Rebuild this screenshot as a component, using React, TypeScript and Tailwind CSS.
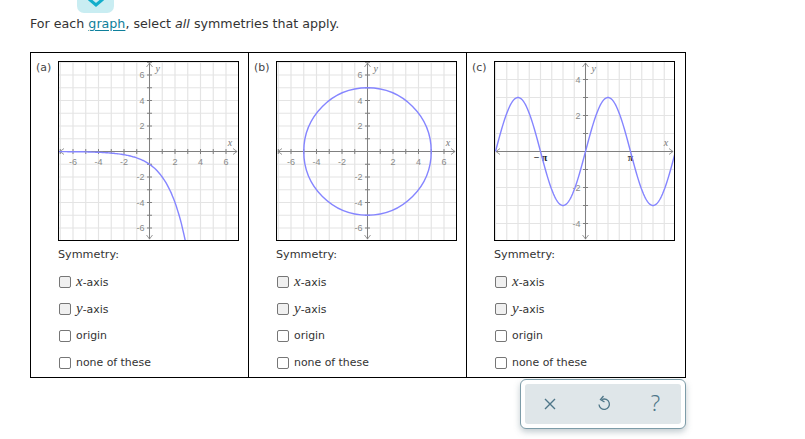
import React from 'react';

const GRID = '#e4e4e4';
const AXIS = '#808080';
const CURVE = '#8585ff';
const W = 179;
const H = 178;
const OX = 90.5;
const OY = 89.5;

type GraphProps = {
  stepX: number;
  stepY: number;
  xLabels: { at: number; text: string; dark?: boolean }[];
  yLabels: { at: number; text: string }[];
  tickX?: boolean;
  children: React.ReactNode;
};

// grid line positions on one side of the axis and the other
const steps = (origin: number, step: number, size: number) => {
  const out: number[] = [];
  for (let p = origin % step; p <= size; p += step) out.push(p);
  return out;
};

const Graph: React.FC<GraphProps> = ({ stepX, stepY, xLabels, yLabels, tickX = true, children }) => (
  <div className="w-[181px] h-[180px] border border-black bg-white">
    <svg width={W} height={H} viewBox={`0 0 ${W} ${H}`} className="block">
      {steps(OX, stepX, W).map((x) => (
        <line key={`vg${x}`} x1={x} x2={x} y1={0} y2={H} stroke={GRID} strokeWidth={1.2} />
      ))}
      {steps(OY, stepY, H).map((y) => (
        <line key={`hg${y}`} x1={0} x2={W} y1={y} y2={y} stroke={GRID} strokeWidth={1.2} />
      ))}
      <line x1={1} x2={W - 1} y1={OY} y2={OY} stroke={AXIS} strokeWidth={1} />
      <line x1={OX} x2={OX} y1={1} y2={H - 1} stroke={AXIS} strokeWidth={1} />
      <path d={`M5 ${OY - 3}L1 ${OY}L5 ${OY + 3}M${W - 5} ${OY - 3}L${W - 1} ${OY}L${W - 5} ${OY + 3}`} fill="none" stroke={AXIS} strokeWidth={0.8} />
      <path d={`M${OX - 3} 5L${OX} 1L${OX + 3} 5M${OX - 3} ${H - 5}L${OX} ${H - 1}L${OX + 3} ${H - 5}`} fill="none" stroke={AXIS} strokeWidth={0.8} />
      {tickX &&
        steps(OX, stepX, W).map((x) => (
          <line key={`vt${x}`} x1={x} x2={x} y1={OY - 2.5} y2={OY + 2.5} stroke={AXIS} strokeWidth={1} />
        ))}
      {steps(OY, stepY, H).map((y) => (
        <line key={`ht${y}`} x1={OX - 2.5} x2={OX + 2.5} y1={y} y2={y} stroke={AXIS} strokeWidth={1} />
      ))}
      {xLabels.map((l) =>
        l.dark ? (
          <text key={l.text} x={OX + l.at} y={OY + 9} textAnchor="middle" fontSize={10} fontWeight={700} fontFamily="'Liberation Serif', serif" fill="#222222">
            {l.text}
          </text>
        ) : (
          <text key={l.text} x={OX + l.at} y={OY + 13} textAnchor="middle" fontSize={9} fontFamily="'Liberation Sans', sans-serif" fill="#8a8a8a">
            {l.text}
          </text>
        ),
      )}
      {yLabels.map((l) => (
        <text key={l.text} x={OX - 5} y={OY - l.at + 3} textAnchor="end" fontSize={9} fontFamily="'Liberation Sans', sans-serif" fill="#8a8a8a">
          {l.text}
        </text>
      ))}
      <text x={W - 8} y={OY - 6} textAnchor="middle" fontSize={10} fontStyle="italic" fontFamily="'Liberation Serif', serif" fill="#777777">x</text>
      <text x={OX + 6} y={10} fontSize={10} fontStyle="italic" fontFamily="'Liberation Serif', serif" fill="#777777">y</text>
      {children}
    </svg>
  </div>
);

const UNIT = 12.75;
const numberLabels = [-6, -4, -2, 2, 4, 6];

const expPath = () => {
  const pts: string[] = [];
  for (let x = -7.1; x <= 2.84; x += 0.1) {
    pts.push(`${(OX + x * UNIT).toFixed(1)} ${(OY + Math.pow(2, x) * UNIT).toFixed(1)}`);
  }
  return `M${pts.join('L')}`;
};

const sinePath = () => {
  const pts: string[] = [];
  for (let px = -90; px <= 90; px += 1) {
    pts.push(`${(OX + px).toFixed(1)} ${(OY - 3 * 18 * Math.sin((px / 45) * Math.PI)).toFixed(1)}`);
  }
  return `M${pts.join('L')}`;
};

const Option: React.FC<{ shaded?: boolean; children: React.ReactNode }> = ({ shaded, children }) => (
  <label className="flex items-center h-[27px] gap-[5px]">
    <input type="checkbox" className={`appearance-none w-[12px] h-[12px] ml-[1px] border border-[#767676] rounded-[2px] ${shaded ? 'bg-[#f0f0f0]' : 'bg-white'}`} />
    <span className="leading-[14px]">{children}</span>
  </label>
);

const Variable: React.FC<{ name: string }> = ({ name }) => (
  <i className="font-['Liberation_Serif',serif] text-[15px] leading-none">{name}</i>
);

const Cell: React.FC<{ label: string; last?: boolean; children: React.ReactNode }> = ({ label, last, children }) => (
  <div className={`w-[218px] flex pl-[5px] pt-[8px] ${last ? '' : 'border-r border-black'}`}>
    <div className="w-[22px] leading-[13px] text-[#444444]">{label}</div>
    <div>
      {children}
      <div className="mt-[6px] h-[16px] leading-[16px] text-[11.2px]">Symmetry:</div>
      <div className="mt-[5px]">
        <Option shaded>
          <Variable name="x" />-axis
        </Option>
        <Option shaded>
          <Variable name="y" />-axis
        </Option>
        <Option>origin</Option>
        <Option>none of these</Option>
      </div>
    </div>
  </div>
);

export default function App() {
  return (
    <div className="w-[805px] h-[439px] overflow-hidden bg-white font-['DejaVu_Sans',Verdana,sans-serif] text-[10.9px] text-[#333333]">
      <div className="ml-[77px] w-[37px] h-[13px] bg-[#c9edf2] rounded-b-[7px] flex justify-center">
        <svg width="18" height="7" viewBox="0 0 18 7">
          <path d="M2 -1L9 5L16 -1" fill="none" stroke="#12aecb" strokeWidth="3" />
        </svg>
      </div>

      <p className="ml-[30px] mt-[3px] h-[16px] leading-[16px] text-[12.67px]">
        For each <a className="text-[#0e7f9b] underline underline-offset-2">graph</a>, select <i>all</i> symmetries that apply.
      </p>

      <div className="ml-[30px] mt-[20px] w-[656px] h-[326px] border border-black flex">
        <Cell label="(a)">
          <Graph
            stepX={UNIT}
            stepY={UNIT}
            xLabels={numberLabels.map((n) => ({ at: n * UNIT, text: String(n) }))}
            yLabels={numberLabels.map((n) => ({ at: n * UNIT, text: String(n) }))}
          >
            <path d={expPath()} fill="none" stroke={CURVE} strokeWidth={1.4} />
          </Graph>
        </Cell>
        <Cell label="(b)">
          <Graph
            stepX={UNIT}
            stepY={UNIT}
            xLabels={numberLabels.map((n) => ({ at: n * UNIT, text: String(n) }))}
            yLabels={numberLabels.map((n) => ({ at: n * UNIT, text: String(n) }))}
          >
            <circle cx={OX} cy={OY} r={5 * UNIT} fill="none" stroke={CURVE} strokeWidth={1.4} />
          </Graph>
        </Cell>
        <Cell label="(c)" last>
          <Graph
            stepX={11.25}
            stepY={18}
            tickX={false}
            xLabels={[
              { at: -45, text: '− π', dark: true },
              { at: 45, text: 'π', dark: true },
            ]}
            yLabels={[-4, -2, 2, 4].map((n) => ({ at: n * 18, text: String(n) }))}
          >
            <path d={sinePath()} fill="none" stroke={CURVE} strokeWidth={1.4} />
          </Graph>
        </Cell>
      </div>

      {/* action bar */}
      <div className="ml-[520px] w-[166px] h-[50px] mt-[1px] p-[4px] border border-[#7d9ca8] rounded-[6px] bg-white shadow-[0_3px_6px_rgba(80,110,120,0.35)]">
        <div className="h-full bg-[#dfe6e9] rounded-[3px] flex items-center justify-between text-[#4e7688] pl-[17px] pr-[21px]">
          <svg width="16" height="16" viewBox="0 0 16 16" fill="none" stroke="currentColor" strokeWidth="1.4">
            <path d="M3 3L13 13M13 3L3 13" />
          </svg>
          <svg width="16" height="18" viewBox="0 0 16 18" fill="none" stroke="currentColor" strokeWidth="1.3">
            <path d="M6 4.5A5.2 5.2 0 1 1 3 9.5" />
            <path d="M7.5 1L4.5 4.5L8.5 7" />
          </svg>
          <span className="text-[22px] leading-none font-light font-['Noto_Sans',sans-serif] -mt-[4px]">?</span>
        </div>
      </div>
    </div>
  );
}
